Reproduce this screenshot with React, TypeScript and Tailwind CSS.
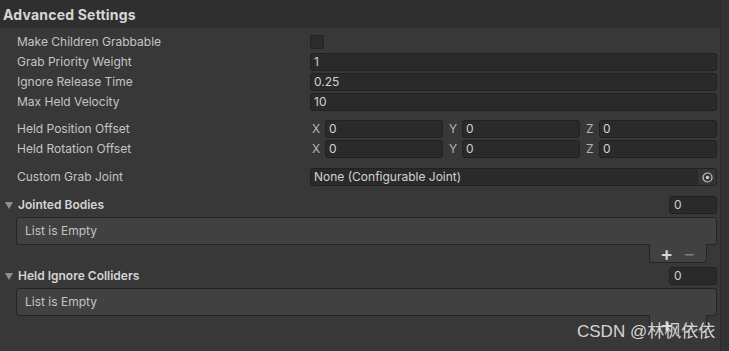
import React from 'react';

const font = "font-['Inter','Noto_Sans','Noto_Sans_CJK_SC',sans-serif]";

const Field = ({ value, className = '' }: { value: string; className?: string }) => (
	<div
		className={`h-[18px] rounded-[3px] border border-[#212121] bg-[#2a2a2a] pl-[3px] text-[12px] leading-[16px] text-[#d2d2d2] ${className}`}
	>
		{value}
	</div>
);

const Row = ({ label, children, bold = false }: { label: string; children: React.ReactNode; bold?: boolean }) => (
	<div className="flex h-[20px] items-center">
		<div className={`w-[310px] shrink-0 pl-[17px] text-[12px] ${bold ? 'font-semibold text-[#d4d4d4]' : 'text-[#c4c4c4]'}`}>
			{label}
		</div>
		<div className="flex-1">{children}</div>
	</div>
);

const VectorField = () => (
	<div className="grid grid-cols-3 gap-[4px]">
		{['X', 'Y', 'Z'].map((axis) => (
			<div key={axis} className="flex items-center">
				<div className="w-[15px] shrink-0 pl-[2px] text-[12px] text-[#b4b4b4]">{axis}</div>
				<Field value="0" className="flex-1" />
			</div>
		))}
	</div>
);

const ListBlock = ({ title }: { title: string }) => (
	<div className="flex flex-col">
		<div className="flex h-[20px] items-center">
			<svg width="12" height="10" viewBox="0 0 12 10" className="ml-[4px] mr-[2px]">
				<path d="M1 2 L9 2 L5 9 Z" fill="#8f8f8f" />
			</svg>
			<div className="flex-1 text-[12px] font-semibold text-[#d4d4d4]">{title}</div>
			<Field value="0" className="w-[48px] pl-[4px]" />
		</div>
		<div className="ml-[16px] mt-[2px] h-[28px] rounded-[3px] border border-[#242424] bg-[#414141] pl-[8px] text-[12px] leading-[26px] text-[#c4c4c4]">
			List is Empty
		</div>
		<div className="flex justify-end pr-[10px]">
			<div className="-mt-[1px] flex h-[19px] w-[58px] items-center justify-center gap-[10px] rounded-b-[4px] border border-t-0 border-[#242424] bg-[#414141] text-[19px] leading-none">
				<span className="font-semibold text-[#d8d8d8]">+</span>
				<span className="text-[#7d7d7d]">−</span>
			</div>
		</div>
	</div>
);

export default function App() {
	return (
		<div className={`relative flex h-[351px] w-[729px] overflow-hidden bg-[#383838] ${font}`}>
			<div className="flex flex-1 flex-col pr-[3px]">
				<div className="-mr-[3px] flex h-[28px] items-center bg-[#2f2f2f] pl-[3px] text-[14px] font-bold tracking-[0.2px] text-[#d6d6d6]">
					Advanced Settings
				</div>

				<div className="mt-[4px] flex flex-col">
					<Row label="Make Children Grabbable">
						<div className="h-[14px] w-[14px] rounded-[2px] border border-[#222] bg-[#2b2b2b]" />
					</Row>
					<Row label="Grab Priority Weight">
						<Field value="1" />
					</Row>
					<Row label="Ignore Release Time">
						<Field value="0.25" />
					</Row>
					<Row label="Max Held Velocity">
						<Field value="10" />
					</Row>
				</div>

				<div className="mt-[7px] flex flex-col">
					<Row label="Held Position Offset">
						<VectorField />
					</Row>
					<Row label="Held Rotation Offset">
						<VectorField />
					</Row>
				</div>

				<div className="mt-[8px]">
					<Row label="Custom Grab Joint">
						<div className="flex h-[18px] items-center rounded-[3px] border border-[#212121] bg-[#2a2a2a] text-[12px] text-[#d2d2d2]">
							<div className="flex-1 pl-[3px]">None (Configurable Joint)</div>
							<div className="flex h-full w-[18px] items-center justify-center rounded-r-[3px] bg-[#353535]">
								<svg width="11" height="11" viewBox="0 0 11 11">
									<circle cx="5.5" cy="5.5" r="4.5" fill="none" stroke="#c8c8c8" strokeWidth="1.2" />
									<circle cx="5.5" cy="5.5" r="1.8" fill="#c8c8c8" />
								</svg>
							</div>
						</div>
					</Row>
				</div>

				<div className="mt-[8px]">
					<ListBlock title="Jointed Bodies" />
				</div>
				<div className="mt-[3px]">
					<ListBlock title="Held Ignore Colliders" />
				</div>
			</div>

			<div className="w-[9px] border-l border-[#2a2a2a] bg-[#323232]" />

			<div className="pointer-events-none absolute left-[577px] top-[319px] text-[17px] text-[#e8e8e8]/90 font-['Liberation_Sans','Noto_Sans_CJK_SC',sans-serif]">
				CSDN @林枫依依
			</div>
		</div>
	);
}
